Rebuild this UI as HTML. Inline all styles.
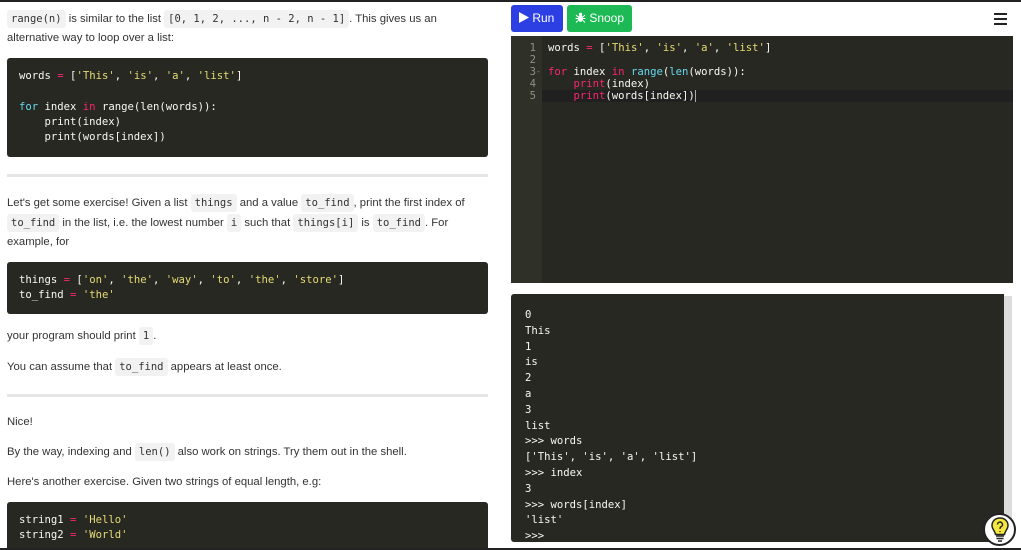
<!DOCTYPE html>
<html><head><meta charset="utf-8"><style>
*{margin:0;padding:0;box-sizing:border-box}
html,body{width:1021px;height:550px;overflow:hidden}
body{background:#fff;position:relative;font-family:"Liberation Sans",sans-serif;font-size:11.3px;color:#333}
.a{position:absolute;white-space:nowrap}
code{font-family:"DejaVu Sans Mono","Liberation Mono",monospace;font-size:10.5px;background:#f2f2f2;padding:3px 4px;border-radius:3px;color:#333}
.pre{position:absolute;left:7px;width:481px;background:#272822;border-radius:3px;color:#f8f8f2;font-family:"DejaVu Sans Mono","Liberation Mono",monospace;font-size:10.6px;line-height:15.3px;padding:11px 12px;white-space:pre}
.k{color:#66d9ef}.o{color:#f92672}.s{color:#e6db74}
hr{position:absolute;left:7px;width:481px;border:none;height:3px;background:#e6e6e6}
.ed{font-family:"DejaVu Sans Mono","Liberation Mono",monospace;font-size:10.6px;line-height:12px;color:#f8f8f2;white-space:pre}
.out{font-family:"DejaVu Sans Mono","Liberation Mono",monospace;font-size:10.6px;line-height:15.8px;color:#f8f8f2;white-space:pre}
</style></head><body>
<div class="a" style="left:0;top:0;width:1021px;height:2px;background:#222"></div>

<div class="a" style="left:7px;top:13px"><code>range(n)</code> is similar to the list <code>[0, 1, 2, ..., n - 2, n - 1]</code>. This gives us an</div>
<div class="a" style="left:7px;top:32px">alternative way to loop over a list:</div>
<div class="pre" style="top:58px;height:99px">words <span class="o">=</span> [<span class="s">'This'</span>, <span class="s">'is'</span>, <span class="s">'a'</span>, <span class="s">'list'</span>]

<span class="k">for</span> index <span class="o">in</span> range(len(words)):
    print(index)
    print(words[index])</div>
<hr style="top:174px">
<div class="a" style="left:7px;top:197px">Let's get some exercise! Given a list <code>things</code> and a value <code>to_find</code>, print the first index of</div>
<div class="a" style="left:7px;top:217px"><code>to_find</code> in the list, i.e. the lowest number <code>i</code> such that <code>things[i]</code> is <code>to_find</code>. For</div>
<div class="a" style="left:7px;top:236px">example, for</div>
<div class="pre" style="top:262px;height:52px">things <span class="o">=</span> [<span class="s">'on'</span>, <span class="s">'the'</span>, <span class="s">'way'</span>, <span class="s">'to'</span>, <span class="s">'the'</span>, <span class="s">'store'</span>]
to_find <span class="o">=</span> <span class="s">'the'</span></div>
<div class="a" style="left:7px;top:330px">your program should print <code>1</code>.</div>
<div class="a" style="left:7px;top:361px">You can assume that <code>to_find</code> appears at least once.</div>
<hr style="top:394px">
<div class="a" style="left:7px;top:416px">Nice!</div>
<div class="a" style="left:7px;top:446px">By the way, indexing and <code>len()</code> also work on strings. Try them out in the shell.</div>
<div class="a" style="left:7px;top:476px">Here's another exercise. Given two strings of equal length, e.g:</div>
<div class="pre" style="top:502px;height:60px">string1 <span class="o">=</span> <span class="s">'Hello'</span>
string2 <span class="o">=</span> <span class="s">'World'</span></div>

<div class="a" style="left:511px;top:5px;width:52px;height:27px;background:#2c3fe3;border-radius:3px;color:#fff;font-size:12px;line-height:27px;padding-left:8px"><svg width="10" height="11" style="vertical-align:-1px"><path d="M0 0L10 5.5L0 11Z" fill="#fff"/></svg> Run</div>
<div class="a" style="left:567px;top:5px;width:65px;height:27px;background:#1db954;border-radius:3px;color:#fff;font-size:12px;line-height:27px;padding-left:8px"><svg width="11" height="11" style="vertical-align:-1px" viewBox="0 0 11 11"><ellipse cx="5.5" cy="6.5" rx="2.6" ry="3.3" fill="#fff"/><circle cx="5.5" cy="2.4" r="1.6" fill="#fff"/><path d="M1 3l2 2M10 3L8 5M0.5 6.5h2.5M8 6.5h2.5M1 10.5l2-2M10 10.5l-2-2" stroke="#fff" stroke-width="1"/></svg> Snoop</div>
<div class="a" style="left:994px;top:13px;width:13px;height:2px;background:#222;box-shadow:0 5px 0 #222,0 10px 0 #222"></div>

<div class="a" style="left:511px;top:36px;width:502px;height:247px;background:#272822"></div>
<div class="a" style="left:511px;top:36px;width:31px;height:247px;background:#2f3129"></div>
<div class="a" style="left:542px;top:90px;width:471px;height:12px;background:#202020"></div>
<div class="a ed" style="left:511px;top:42px;width:25px;text-align:right;color:#8f908a">1
2
3
4
5</div>
<div class="a ed" style="left:536px;top:66px;color:#8f908a;font-size:8px">-</div>
<div class="a ed" style="left:548px;top:42px">words <span class="o">=</span> [<span class="s">'This'</span>, <span class="s">'is'</span>, <span class="s">'a'</span>, <span class="s">'list'</span>]

<span class="o">for</span> index <span class="o">in</span> <span class="k">range</span>(<span class="k">len</span>(words)):
    <span class="o">print</span>(index)
    <span class="o">print</span>(words[index])<span style="border-left:1px solid #aaa"></span></div>

<div class="a" style="left:511px;top:294px;width:493px;height:248px;background:#272822;border-radius:3px 0 0 3px"></div>
<div class="a" style="left:1004px;top:296px;width:8px;height:244px;background:#dcdcdc"></div>
<div class="a out" style="left:525px;top:308px">0
This
1
is
2
a
3
list
&gt;&gt;&gt; words
['This', 'is', 'a', 'list']
&gt;&gt;&gt; index
3
&gt;&gt;&gt; words[index]
'list'
&gt;&gt;&gt;</div>
<div class="a" style="left:983px;top:513px;width:33px;height:33px;border-radius:50%;background:#fff;border:2px solid #222"></div>
<svg class="a" style="left:989px;top:516px" width="22" height="28" viewBox="0 0 22 28"><path d="M11 2C6 2 3 5.5 3 9.5c0 3.5 3 5.5 3.5 9h9c.5-3.5 3.5-5.5 3.5-9C19 5.5 16 2 11 2Z" fill="#f5e83a" stroke="#222" stroke-width="1.5"/><path d="M8.5 8.5a2.5 2.5 0 1 1 3.5 2.3c-1 .5-1 1.2-1 2.2M11 15v1" fill="none" stroke="#222" stroke-width="1.4"/><path d="M7 20h8M7.5 22.5h7M9 25h4" stroke="#222" stroke-width="1.5"/></svg>
<div class="a" style="left:0;top:548px;width:1021px;height:2px;background:#222"></div>
</body></html>
